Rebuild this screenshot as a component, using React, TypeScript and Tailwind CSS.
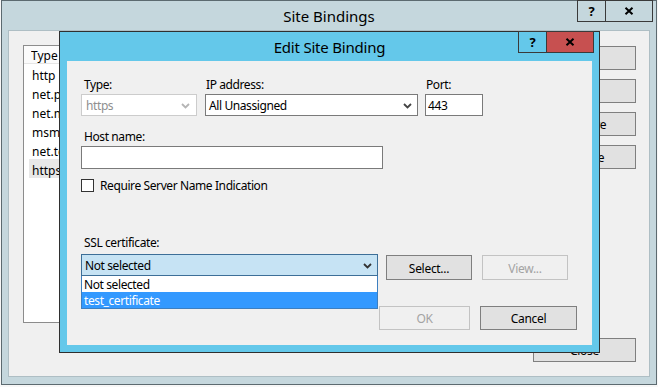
import React from "react";

const Chevron = ({ color = "#444" }: { color?: string }) => (
  <svg width="9" height="6" viewBox="0 0 9 6" className="shrink-0">
    <path d="M1 1 L4.5 4.5 L8 1" fill="none" stroke={color} strokeWidth="1.8" />
  </svg>
);

const XGlyph = () => (
  <svg width="10" height="8" viewBox="0 0 10 8">
    <path d="M1.5 0.8 L8.5 7.2 M8.5 0.8 L1.5 7.2" fill="none" stroke="#000" strokeWidth="2" />
  </svg>
);

const CaptionButtons = ({ red }: { red?: boolean }) => (
  <div className="flex h-[22px]">
    <div className="w-[29px] h-full border border-[#3a3a3a] flex items-center justify-center text-[13px] font-bold leading-none text-black">
      ?
    </div>
    <div
      className={
        "w-[47px] h-full border border-l-0 border-[#3a3a3a] flex items-center justify-center " +
        (red ? "bg-[#c75050]" : "")
      }
    >
      <XGlyph />
    </div>
  </div>
);

const WinButton = ({ label, disabled }: { label: string; disabled?: boolean }) => (
  <div
    className={
      "h-full w-full flex items-center justify-center pt-[2px] text-[12px] leading-none tracking-[-0.3px] border " +
      (disabled
        ? "bg-[#f0f0f0] border-[#c3c3c3] text-[#a3a3a3]"
        : "bg-[#e1e1e1] border-[#7f7f7f] text-black")
    }
  >
    {label}
  </div>
);

export default function App() {
  const rows = ["http", "net.pipe", "net.msmq", "msmq.formatname", "net.tcp", "https"];
  return (
    <div className="relative w-[658px] h-[387px] overflow-hidden bg-[#f7f7f7] font-['Noto_Sans',sans-serif] text-black">
      {/* Outer window: Site Bindings */}
      <div className="ml-px w-[656px] h-[385px] border border-[#5c6a70] bg-[#c5d7dd] flex flex-col">
        <div className="h-[29px] grid grid-cols-[1fr_auto_1fr] items-start shrink-0">
          <div />
          <div className="text-[15px] leading-[20px] mt-[5px]">Site Bindings</div>
          <div className="flex justify-end mt-[-1px] mr-[3px]">
            <CaptionButtons />
          </div>
        </div>
        <div className="flex-1 mx-[6px] mb-[7px] bg-[#f0f0f0] border border-[#aebec4] flex">
          {/* list box */}
          <div className="ml-[14px] mt-[14px] w-[498px] h-[278px] bg-white border border-[#8c8c8c] flex flex-col overflow-hidden">
            <div className="h-[18px] flex pl-[7px] pt-[2px] leading-[16px] text-[12px] bg-[#fbfbfb] border-b border-[#e5e5e5]">
              <span className="w-[34px] overflow-hidden whitespace-nowrap">Type</span>
            </div>
            {rows.map((r) => (
              <div key={r} className="h-[19px] flex pl-[5px] text-[12px]">
                <div
                  className={
                    "w-[40px] pl-[3px] pt-[2px] leading-[19px] overflow-hidden whitespace-nowrap " +
                    (r === "https" ? "bg-[#e8e8e8] flex-1" : "")
                  }
                >
                  {r}
                </div>
              </div>
            ))}
          </div>
          {/* buttons column */}
          <div className="ml-[12px] mt-[15px] mb-[14px] w-[103px] flex flex-col">
            <div className="flex flex-col gap-[9px]">
              {["Add...", "Edit...", "Remove", "Browse"].map((b) => (
                <div key={b} className="h-[24px]">
                  <WinButton label={b} />
                </div>
              ))}
            </div>
            <div className="mt-auto h-[24px]">
              <WinButton label="Close" />
            </div>
          </div>
        </div>
      </div>

      {/* Edit Site Binding dialog */}
      <div className="absolute left-[59px] top-[31px] w-[541px] h-[322px] border border-[#2f2f2f] bg-[#64c8ea] flex flex-col">
        <div className="h-[29px] grid grid-cols-[1fr_auto_1fr] items-start shrink-0">
          <div />
          <div className="text-[15px] leading-[20px] mt-[5px] tracking-[-0.2px]">Edit Site Binding</div>
          <div className="flex justify-end mr-[5px] mt-[-1px]">
            <CaptionButtons red />
          </div>
        </div>
        <div className="flex-1 ml-[7px] mr-[7px] mb-[7px] bg-[#f0f0f0] flex flex-col pl-[14px] text-[12px] tracking-[-0.4px]">
          {/* Type / IP / Port */}
          <div className="mt-[16px] flex">
            <div className="w-[116px] flex flex-col">
              <div className="h-[16px] leading-[16px] pl-[3px] mb-[1px]">Type:</div>
              <div className="h-[22px] border border-[#cccccc] bg-white flex items-center pt-[2px] pl-[4px] pr-[6px] text-[#8f8f8f]">
                <span className="flex-1">https</span>
                <Chevron color="#b5b5b5" />
              </div>
            </div>
            <div className="ml-[8px] w-[213px] flex flex-col">
              <div className="h-[16px] leading-[16px] pl-[1px] mb-[1px]">IP address:</div>
              <div className="h-[22px] border border-[#7a7a7a] bg-white flex items-center pt-[2px] pl-[3px] pr-[5px]">
                <span className="flex-1">All Unassigned</span>
                <Chevron />
              </div>
            </div>
            <div className="ml-[7px] w-[58px] flex flex-col">
              <div className="h-[16px] leading-[16px] pl-[1px] mb-[1px]">Port:</div>
              <div className="h-[22px] border border-[#7a7a7a] bg-white flex items-center pt-[2px] pl-[2px]">443</div>
            </div>
          </div>
          {/* Host name */}
          <div className="mt-[13px] h-[16px] leading-[16px] pl-[3px]">Host name:</div>
          <div className="mt-[1px] w-[302px] h-[23px] border border-[#7a7a7a] bg-white" />
          {/* checkbox */}
          <div className="mt-[10px] flex items-center h-[13px]">
            <div className="w-[13px] h-[13px] border border-[#333333] bg-white" />
            <span className="ml-[6px] leading-[16px] pt-[1px]">Require Server Name Indication</span>
          </div>
          {/* SSL */}
          <div className="mt-[43px] h-[16px] leading-[16px] pl-[3px]">SSL certificate:</div>
          <div className="mt-[3px] flex items-start">
            <div className="relative w-[297px] h-[22px]">
              <div className="h-full border border-[#3d6f98] bg-[#c6e3f4] flex items-center pt-[2px] pl-[3px] pr-[5px]">
                <span className="flex-1">Not selected</span>
                <Chevron color="#333" />
              </div>
              <div className="absolute left-0 top-full w-full border-x border-b border-[#3d7fc0] bg-white flex flex-col z-10">
                <div className="h-[16px] leading-[16px] pt-[1px] pl-[2px] bg-white">Not selected</div>
                <div className="h-[16px] leading-[16px] pt-[1px] pl-[2px] bg-[#3399ff] text-white">test_certificate</div>
              </div>
            </div>
            <div className="ml-[8px] mt-px w-[86px] h-[25px]">
              <WinButton label="Select..." />
            </div>
            <div className="ml-[10px] mt-px w-[86px] h-[25px]">
              <WinButton label="View..." disabled />
            </div>
          </div>
          {/* OK / Cancel */}
          <div className="mt-[26px] flex justify-end pr-[15px]">
            <div className="w-[91px] h-[24px]">
              <WinButton label="OK" disabled />
            </div>
            <div className="ml-[10px] w-[97px] h-[24px]">
              <WinButton label="Cancel" />
            </div>
          </div>
        </div>
      </div>
    </div>
  );
}
